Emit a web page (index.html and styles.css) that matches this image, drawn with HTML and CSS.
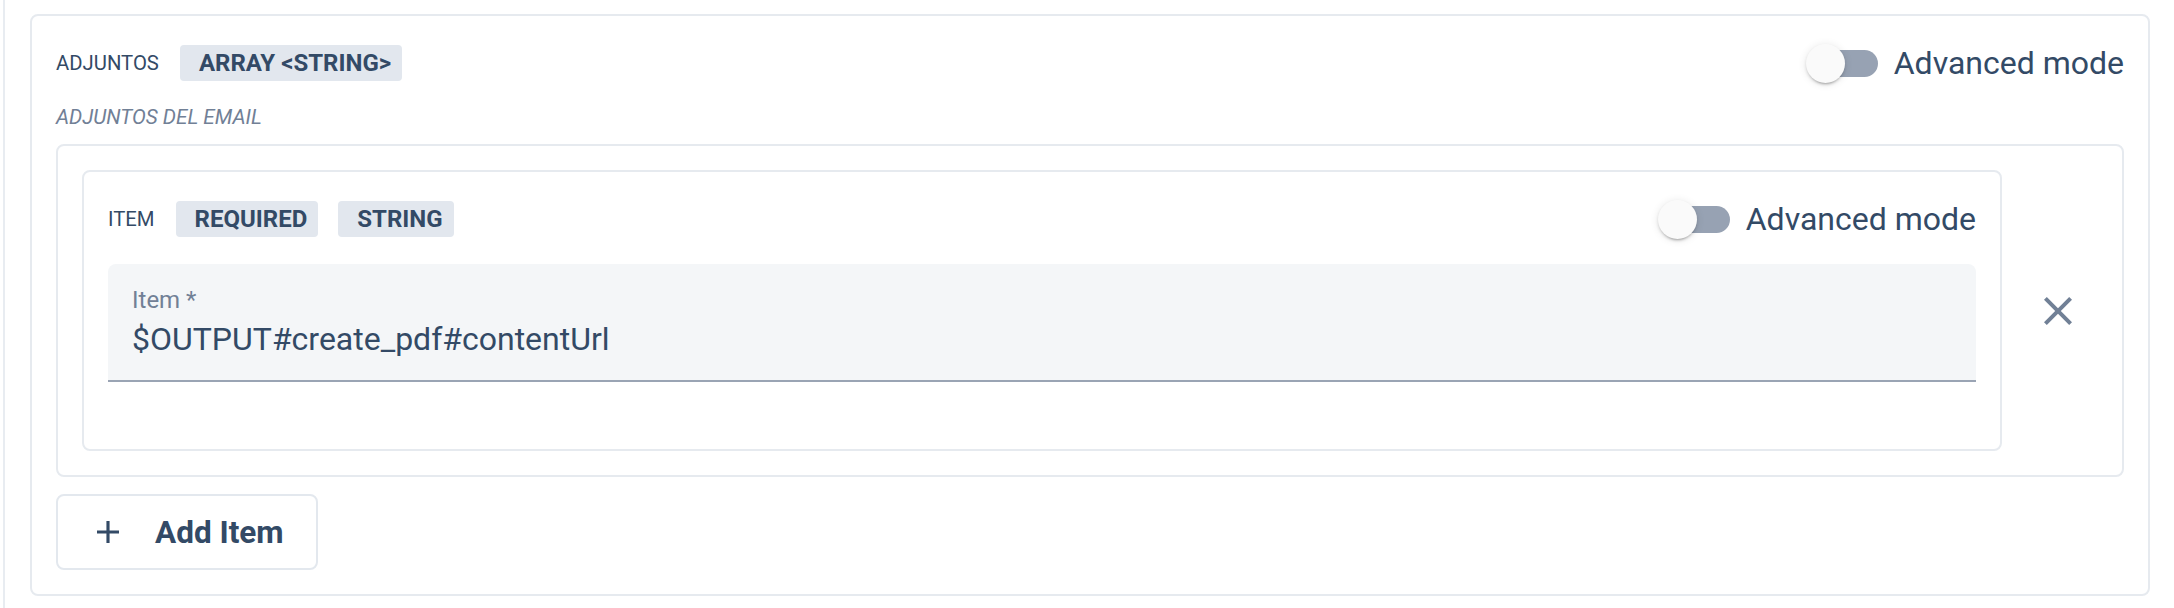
FILE: index.html
```html
<!DOCTYPE html>
<html lang="es">
<head>
<meta charset="utf-8">
<title>Adjuntos</title>
<link rel="stylesheet" href="styles.css">
</head>
<body>
<div class="page">
  <section class="field-card">
    <div class="field-head">
      <div class="field-title">
        <span class="field-name">Adjuntos</span>
        <span class="chip">ARRAY &lt;STRING&gt;</span>
      </div>
      <div class="adv">
        <span class="switch"><span class="track"></span><span class="knob"></span></span>
        <span class="adv-label">Advanced mode</span>
      </div>
    </div>
    <div class="field-desc">Adjuntos del email</div>

    <div class="items">
      <div class="item-row">
        <div class="item-card">
          <div class="field-head">
            <div class="field-title">
              <span class="field-name">Item</span>
              <span class="chips">
                <span class="chip">REQUIRED</span>
                <span class="chip">STRING</span>
              </span>
            </div>
            <div class="adv">
              <span class="switch"><span class="track"></span><span class="knob"></span></span>
              <span class="adv-label">Advanced mode</span>
            </div>
          </div>
          <div class="input">
            <div class="input-label">Item *</div>
            <div class="input-value">$OUTPUT#create_pdf#contentUrl</div>
          </div>
        </div>
        <button class="remove" type="button" aria-label="Remove">
          <svg width="28" height="28" viewBox="5 5 14 14"><path fill="#718096" d="M19 6.41L17.59 5 12 10.59 6.41 5 5 6.41 10.59 12 5 17.59 6.41 19 12 13.41 17.59 19 19 17.59 13.41 12z"/></svg>
        </button>
      </div>
    </div>

    <button class="add" type="button">
      <svg width="22" height="22" viewBox="5 5 14 14"><path fill="#334a66" d="M19 13h-6v6h-2v-6H5v-2h6V5h2v6h6v2z"/></svg>
      <span>Add Item</span>
    </button>
  </section>
</div>
</body>
</html>
```

FILE: styles.css
```css
* {
  box-sizing: border-box;
}

body {
  margin: 0;
  background: #ffffff;
  color: #334a66;
  font-family: Roboto, "Noto Sans", "Liberation Sans", sans-serif;
}

.page {
  margin-left: 3px;
  border-left: 2px solid #e8ecf1;
  padding: 14px 24px 0 25px;
  height: 608px;
}

.field-card {
  border: 2px solid #e6eaef;
  border-radius: 8px;
  padding: 24px;
}

.field-head {
  display: flex;
  align-items: center;
  justify-content: space-between;
  height: 46px;
}

.field-title {
  display: flex;
  align-items: center;
  gap: 21px;
}

.field-name {
  font-size: 20.3px;
  text-transform: uppercase;
  color: #334a66;
}

.chips {
  display: flex;
  gap: 20px;
}

.chip {
  display: inline-flex;
  align-items: center;
  height: 36px;
  padding: 0 11px 0 19px;
  background: #e2e7ee;
  border-radius: 4px;
  font-size: 24px;
  font-weight: 700;
  color: #334a66;
}

.adv {
  display: flex;
  align-items: center;
}

.switch {
  position: relative;
  display: flex;
  align-items: center;
  width: 72px;
  height: 40px;
}

.track {
  margin-left: 7px;
  width: 65px;
  height: 27px;
  border-radius: 14px;
  background: #97a2b3;
}

.knob {
  position: absolute;
  left: 0;
  top: 1px;
  width: 39px;
  height: 39px;
  border-radius: 50%;
  background: #fafafa;
  box-shadow: 0 3px 2px -2px rgba(0, 0, 0, 0.2), 0 2px 3px rgba(0, 0, 0, 0.12), 0 1px 8px rgba(0, 0, 0, 0.1);
}

.adv-label {
  margin-left: 16px;
  font-size: 32px;
  color: #334a66;
}

.field-desc {
  margin-top: 19px;
  font-size: 20.7px;
  line-height: 24px;
  font-style: italic;
  text-transform: uppercase;
  color: #718096;
}

.items {
  margin-top: 15px;
  border: 2px solid #e6eaef;
  border-radius: 8px;
  padding: 24px 36px 24px 24px;
}

.item-row {
  display: flex;
  align-items: center;
}

.item-card {
  flex: 1;
  border: 2px solid #e6eaef;
  border-radius: 8px;
  padding: 24px;
}

.item-card .field-title {
  gap: 21px;
}

.input {
  margin-top: 22px;
  margin-bottom: 43px;
  background: #f4f6f8;
  border-radius: 8px 8px 0 0;
  border-bottom: 2px solid #9aa4b4;
  padding: 22px 24px;
}

.input-label {
  font-size: 24px;
  line-height: 28px;
  color: #718096;
}

.input-value {
  margin-top: 6px;
  font-size: 32px;
  line-height: 38px;
  color: #334a66;
}

.remove {
  margin-left: 28px;
  width: 56px;
  height: 56px;
  padding: 0;
  border: 0;
  background: none;
  display: flex;
  align-items: center;
  justify-content: center;
}

.add {
  margin-top: 17px;
  width: 262px;
  height: 76px;
  border: 2px solid #e3e8ee;
  border-radius: 8px;
  background: #ffffff;
  display: flex;
  align-items: center;
  gap: 36px;
  padding: 0 0 0 39px;
  font-family: Roboto, "Noto Sans", "Liberation Sans", sans-serif;
  font-size: 31.5px;
  font-weight: 700;
  color: #334a66;
}

.add svg {
  flex: none;
}
```
